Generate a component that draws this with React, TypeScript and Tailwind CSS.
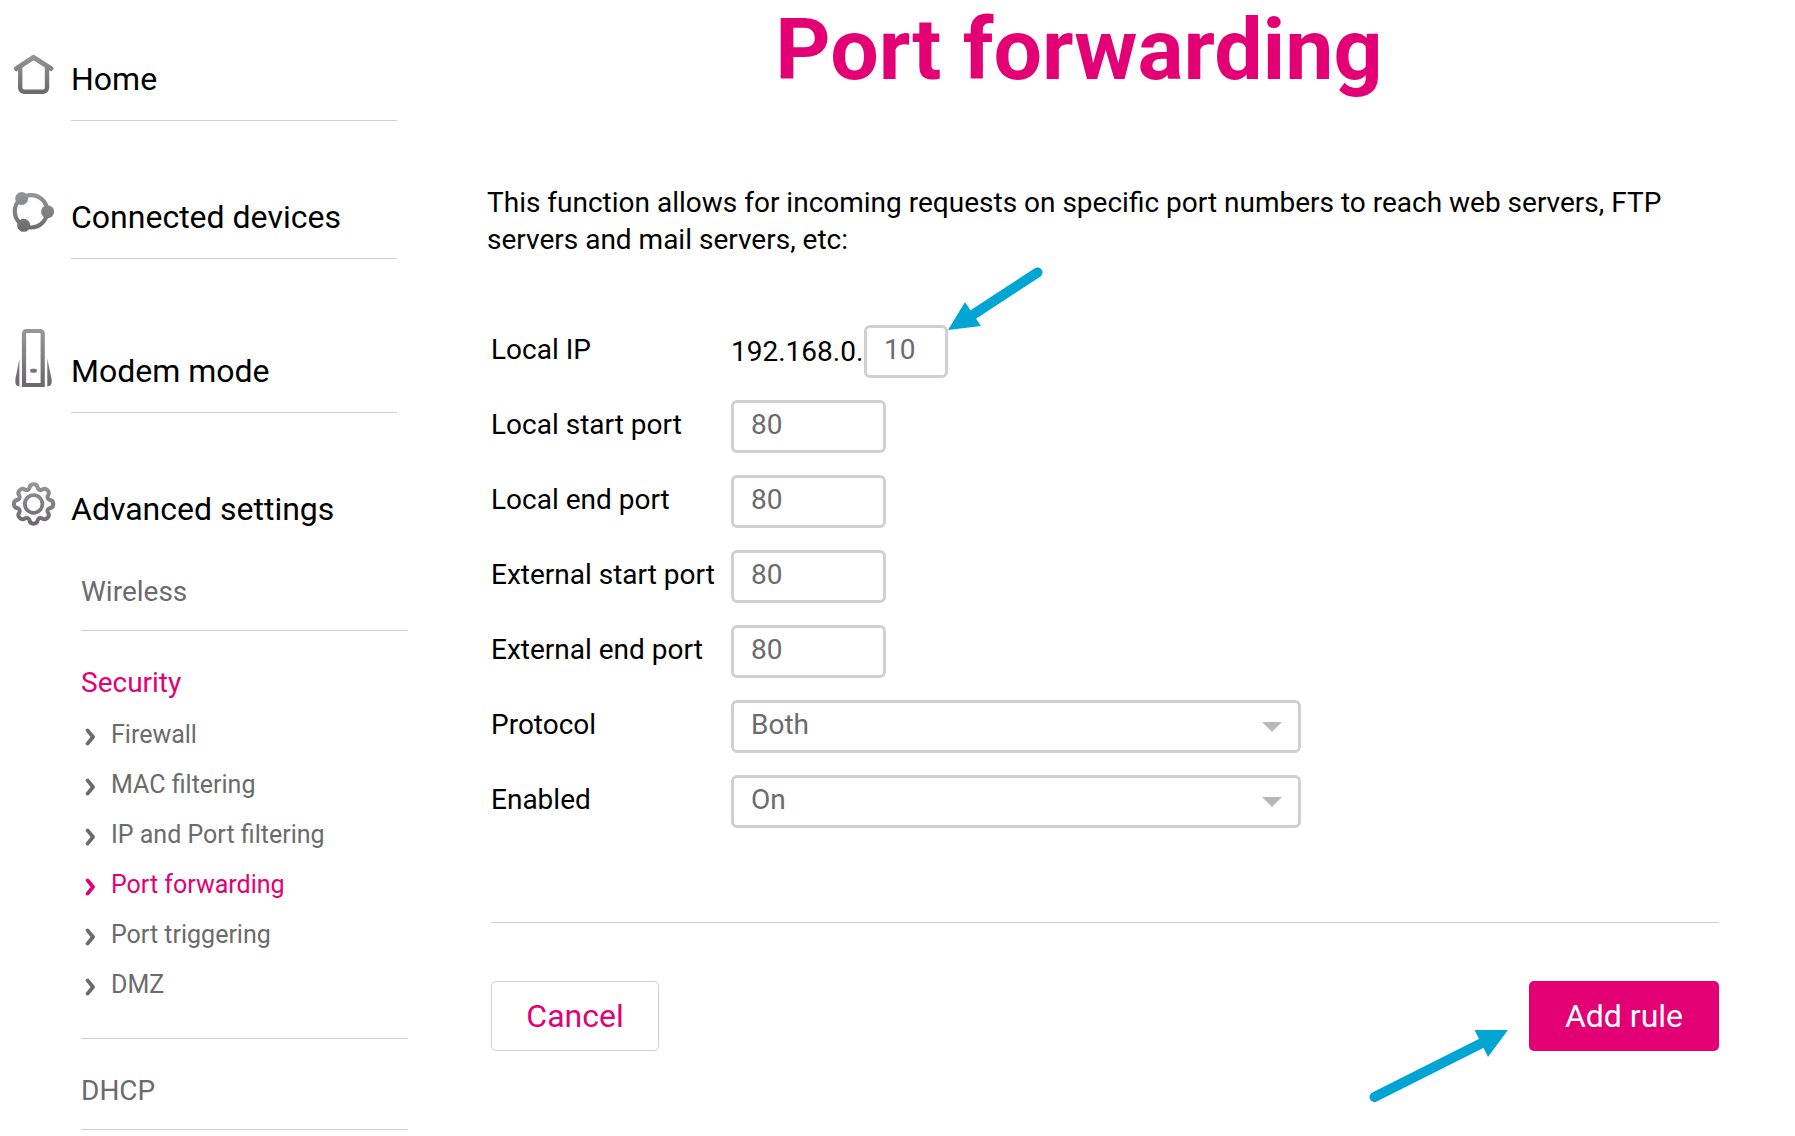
import type { ReactNode } from 'react';

const securityLinks = ['Firewall', 'MAC filtering', 'IP and Port filtering', 'Port forwarding', 'Port triggering', 'DMZ'];

const portFields = [
  { id: 'local-start', label: 'Local start port' },
  { id: 'local-end', label: 'Local end port' },
  { id: 'external-start', label: 'External start port' },
  { id: 'external-end', label: 'External end port' },
];

const selectFields = [
  { id: 'protocol', label: 'Protocol', options: ['Both', 'TCP', 'UDP'] },
  { id: 'enabled', label: 'Enabled', options: ['On', 'Off'] },
];

const fieldClass = 'h-[53px] rounded-md border-3 border-[#d0d0d0] bg-white px-[17px] pb-1 text-[28px] leading-[37px] text-[#6b6b6b]';

// Outline of the gear: eight round teeth joined by shallow notches.
function gearPath(cx: number, cy: number) {
  const at = (deg: number) => {
    const a = (deg * Math.PI) / 180;
    return `${(cx + 16.6 * Math.sin(a)).toFixed(2)} ${(cy - 16.6 * Math.cos(a)).toFixed(2)}`;
  };
  let d = `M${at(-14.5)}`;
  for (let i = 0; i < 8; i++) {
    d += `A4.2 4.2 0 0 1 ${at(i * 45 + 14.5)}A3 3 0 0 0 ${at(i * 45 + 30.5)}`;
  }
  return d + 'Z';
}

function IconFrame({ id, height = 44, children }: { id: string; height?: number; children: ReactNode }) {
  return (
    <svg width="44" height={height} viewBox={`0 0 44 ${height}`} fill="none" stroke={`url(#${id})`} strokeWidth="4.2" strokeLinecap="round" strokeLinejoin="round" className="mb-[3px] shrink-0 overflow-visible" aria-hidden="true">
      <defs>
        <linearGradient id={id} gradientUnits="userSpaceOnUse" x1="0" y1="0" x2="0" y2={height}>
          <stop offset="0" stopColor="#97999b" />
          <stop offset="1" stopColor="#6a666a" />
        </linearGradient>
      </defs>
      {children}
    </svg>
  );
}

function HomeIcon() {
  return (
    <IconFrame id="home-grey">
      <path d="M4.500 16.500 21.500 5.300 39 16.500" strokeWidth="5" />
      <path d="M8.200 16V35.800a4 4 0 0 0 4 4H31a4 4 0 0 0 4-4V16" strokeWidth="4.400" />
    </IconFrame>
  );
}

function DevicesIcon() {
  return (
    <IconFrame id="devices-grey">
      <circle cx="19" cy="21.3" r="16.2" />
      <g fill="url(#devices-grey)" stroke="none">
        <circle cx="9.7" cy="8.5" r="6.5" />
        <circle cx="35.6" cy="21.7" r="6.5" />
        <circle cx="11.7" cy="35.3" r="6.5" />
      </g>
    </IconFrame>
  );
}

function ModemIcon() {
  return (
    <IconFrame id="modem-grey" height={60}>
      <path d="M12 57V5.500a2.500 2.500 0 0 1 2.500-2.500H28.200a2.500 2.500 0 0 1 2.500 2.500V57Z" strokeLinejoin="miter" />
      <g fill="url(#modem-grey)" stroke="none">
        <rect x="18" y="40.8" width="7" height="4" rx="2" />
        <path d="M7.400 30.500V58.600Q3.400 58 3.400 54.500V51ZM35.300 30.500V58.600Q39.600 58 39.600 54.500V51Z" />
      </g>
    </IconFrame>
  );
}

function GearIcon() {
  return (
    <IconFrame id="gear-grey">
      <path d={gearPath(21.6, 22)} strokeWidth="4" />
      <circle cx="21.6" cy="22" r="8.8" strokeWidth="3.8" />
    </IconFrame>
  );
}

function NavItem({ icon, label, divider = true }: { icon: ReactNode; label: string; divider?: boolean }) {
  return (
    <li>
      <a href="#" className="flex items-end gap-[15px] text-[32px] leading-10">
        {icon}
        {label}
      </a>
      {divider && <hr className="ml-[59px] mt-[21px] w-[326px] border-[#cfcfcf]" />}
    </li>
  );
}

function Sidebar() {
  return (
    <nav className="w-[408px] shrink-0 pb-1 pl-3 pt-[52px]">
      <ul className="flex flex-col gap-[69px]">
        <NavItem icon={<HomeIcon />} label="Home" />
        <NavItem icon={<DevicesIcon />} label="Connected devices" />
        <NavItem icon={<ModemIcon />} label="Modem mode" />
        <NavItem icon={<GearIcon />} label="Advanced settings" divider={false} />
      </ul>

      <ul className="ml-[69px] mt-[45px] flex flex-col gap-[34px] text-[28px] leading-9 text-[#6b6b6b]">
        <li className="border-b border-[#cfcfcf] pb-5">
          <a href="#">Wireless</a>
        </li>
        <li className="border-b border-[#cfcfcf] pb-7">
          <a href="#" className="text-[#e20074]">
            Security
          </a>
          <ul className="mt-[9px] text-[25px] leading-[50px]">
            {securityLinks.map((link) => (
              <li key={link}>
                <a href="#" className={`flex items-center gap-4 pl-1 ${link === 'Port forwarding' ? 'text-[#e20074]' : ''}`}>
                  <svg width="10" height="18" viewBox="0 0 10 18" fill="none" stroke="currentColor" strokeWidth="3.8" strokeLinecap="round" strokeLinejoin="round" className="mt-1" aria-hidden="true">
                    <path d="M2.600 2.400 8 9 2.600 15.600" />
                  </svg>
                  {link}
                </a>
              </li>
            ))}
          </ul>
        </li>
        <li className="border-b border-[#cfcfcf] pb-5">
          <a href="#">DHCP</a>
        </li>
      </ul>
    </nav>
  );
}

function FormRow({ id, label, children }: { id: string; label: string; children: ReactNode }) {
  return (
    <div className="grid grid-cols-[240px_1fr] items-center">
      <label htmlFor={id} className="pb-1">
        {label}
      </label>
      <div className="flex items-center">{children}</div>
    </div>
  );
}

export default function App() {
  return (
    <div className="flex bg-white font-['Roboto',sans-serif] text-black">
      <Sidebar />

      <main className="ml-[79px] mr-[76px] min-w-0 flex-1 pt-0.5 text-[28px] leading-[37px]">
        <h1 className="pr-12 text-center text-[86px] font-bold leading-[96px] text-[#e20074]">Port forwarding</h1>
        <p className="mt-[86px]">
          This function allows for incoming requests on specific port numbers to reach web servers, FTP servers and mail servers, etc:
        </p>

        <form className="ml-1 mt-[67px]" onSubmit={(e) => e.preventDefault()}>
          <div className="flex flex-col gap-[22px]">
            <FormRow id="local-ip" label="Local IP">
              <span className="w-[133px]">192.168.0.</span>
              <div className="relative flex">
                <input id="local-ip" defaultValue="10" className={`w-[84px] ${fieldClass}`} />
                <svg width="95" height="64" viewBox="0 0 95 64" className="absolute -top-[59px] left-full" aria-hidden="true">
                  <path d="M26 48 89.500 6.500" stroke="#00a5d3" strokeWidth="10" strokeLinecap="round" />
                  <path d="M0 64 17 36 33 60Z" fill="#00a5d3" />
                </svg>
              </div>
            </FormRow>

            {portFields.map(({ id, label }) => (
              <FormRow key={id} id={id} label={label}>
                <input id={id} defaultValue="80" className={`w-[155px] ${fieldClass}`} />
              </FormRow>
            ))}

            {selectFields.map(({ id, label, options }) => (
              <FormRow key={id} id={id} label={label}>
                <div className="relative flex w-[570px]">
                  <select id={id} className={`w-full appearance-none ${fieldClass}`}>
                    {options.map((option) => (
                      <option key={option}>{option}</option>
                    ))}
                  </select>
                  <svg width="20" height="10" viewBox="0 0 20 10" className="pointer-events-none absolute right-[19px] top-[22px]" aria-hidden="true">
                    <path d="M0 0H20L10 10Z" fill="#b8b8b8" />
                  </svg>
                </div>
              </FormRow>
            ))}
          </div>

          <div className="mt-[94px] flex justify-between border-t border-[#cfcfcf] pt-[58px] text-[32px]">
            <button type="button" className="h-[70px] w-[168px] rounded-[5px] border border-[#d0d0d0] text-[#e20074]">
              Cancel
            </button>
            <div className="relative">
              <svg width="140" height="73" viewBox="0 0 140 73" className="absolute right-full top-[49px] mr-[21px]" aria-hidden="true">
                <path d="M6.500 67 114 13" stroke="#00a5d3" strokeWidth="10" strokeLinecap="round" />
                <path d="M140 0H106.500L120 27Z" fill="#00a5d3" />
              </svg>
              <button type="submit" className="h-[70px] w-[190px] rounded-[5px] bg-[#e20074] text-white">
                Add rule
              </button>
            </div>
          </div>
        </form>
      </main>
    </div>
  );
}
